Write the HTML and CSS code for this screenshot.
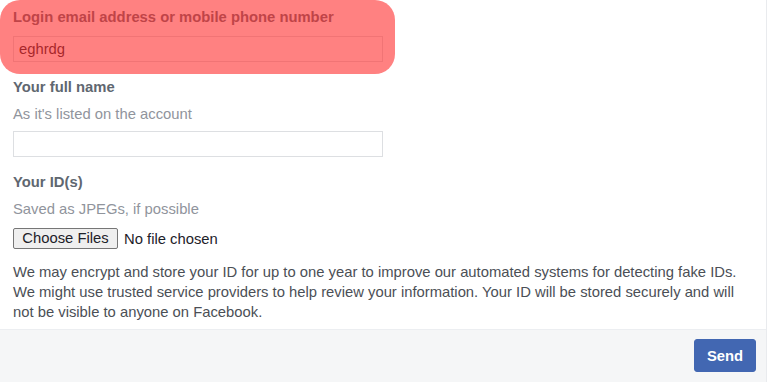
FILE: index.html
```html
<!DOCTYPE html>
<html lang="en">
<head>
    <meta charset="UTF-8">
    <meta name="viewport" content="width=device-width, initial-scale=1.0">
    <title>Confirm your identity</title>
    <link rel="stylesheet" href="styles.css">
</head>
<body>
    <div class="page">
        <form class="form" onsubmit="return false">
            <div class="highlight"></div>
            <div class="label first">Login email address or mobile phone number</div>
            <input type="text" class="field" value="eghrdg">

            <div class="label">Your full name</div>
            <div class="hint">As it's listed on the account</div>
            <input type="text" class="field">

            <div class="label">Your ID(s)</div>
            <div class="hint">Saved as JPEGs, if possible</div>
            <div class="file">
                <span class="file-button">Choose Files</span>
                <span class="file-name">No file chosen</span>
            </div>

            <p class="note">We may encrypt and store your ID for up to one year to improve our automated systems for detecting fake IDs. We might use trusted service providers to help review your information. Your ID will be stored securely and will not be visible to anyone on Facebook.</p>
        </form>
        <div class="footer">
            <button class="send">Send</button>
        </div>
    </div>
</body>
</html>
```

FILE: styles.css
```css
body {
    margin: 0;
    padding: 0;
    font-family: "Liberation Sans", Arial, sans-serif;
    font-size: 14.8px;
    background-color: white;
    overflow: hidden;
}

.page {
    width: 766px;
    border-right: 1px solid #e9ebee;
}

.form {
    position: relative;
    padding: 8px 13px 0;
}

.highlight {
    position: absolute;
    top: 0;
    left: 0;
    width: 395px;
    height: 74px;
    border-radius: 20px;
    background: rgba(255, 45, 45, 0.6);
    pointer-events: none;
    z-index: 2;
}

.label {
    font-weight: bold;
    color: #606770;
    line-height: 18px;
    margin-top: 16px;
}

.label.first {
    margin-top: 0;
}

.hint {
    color: #90949c;
    line-height: 18px;
    margin-top: 9px;
}

.field {
    display: block;
    box-sizing: border-box;
    width: 370px;
    height: 26px;
    margin: 10px 0 0;
    padding: 0 5px;
    border: 1px solid #dddfe2;
    font-family: inherit;
    font-size: 14.8px;
    color: #1d2129;
    outline: none;
}

.hint + .field {
    margin-top: 8px;
}

.file {
    display: flex;
    align-items: center;
    gap: 6px;
    margin-top: 10px;
    color: #1d2129;
}

.file-button {
    box-sizing: border-box;
    height: 21px;
    width: 105px;
    line-height: 19px;
    text-align: center;
    background: #efefef;
    border: 1px solid #767676;
    border-radius: 2px;
}

.note {
    margin: 13px 0 0;
    line-height: 20px;
    color: #4b4f56;
    padding-right: 5px;
}

.footer {
    display: flex;
    justify-content: flex-end;
    margin-top: 7px;
    padding: 9px 10px 12px;
    background: #f5f6f7;
    border-top: 1px solid #eceef1;
}

.send {
    height: 33px;
    width: 62px;
    padding: 0;
    background-color: #4267b2;
    border: 1px solid #4267b2;
    border-radius: 3px;
    color: white;
    font-family: inherit;
    font-size: 14.8px;
    font-weight: bold;
}
```
